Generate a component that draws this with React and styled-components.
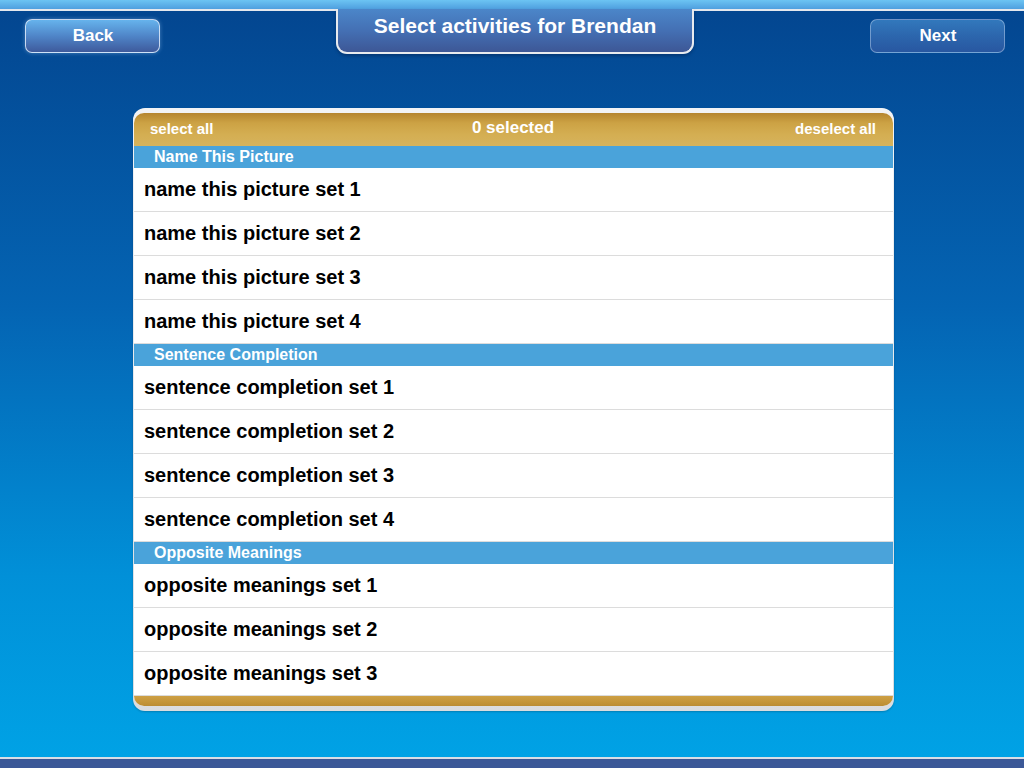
import React from "react";
import styled, { createGlobalStyle } from "styled-components";

const Global = createGlobalStyle`
  html, body { margin: 0; padding: 0; }
  body { font-family: "Liberation Sans", Arial, sans-serif; overflow: hidden; }
`;

const Page = styled.div`
  width: 1024px;
  height: 768px;
  display: flex;
  flex-direction: column;
  background: linear-gradient(180deg, #03458f 0%, #0464b3 40%, #0190d8 75%, #00a3e6 100%);
`;

const TopStrip = styled.div`
  height: 9px;
  flex: none;
  background: linear-gradient(180deg, #6cc4f3 0%, #4f9fdf 100%);
  border-bottom: 2px solid #e4e8ee;
`;

const HeaderRow = styled.div`
  height: 42px;
  flex: none;
  display: flex;
  justify-content: space-between;
  align-items: flex-start;
  padding: 0 19px 0 25px;
`;

const NavButton = styled.button`
  margin-top: 8px;
  width: 135px;
  height: 34px;
  border-radius: 7px;
  border: 1px solid ${(p) => (p.$bright ? "rgba(225,235,250,0.85)" : "rgba(200,220,245,0.45)")};
  background: ${(p) =>
    p.$bright
      ? "linear-gradient(180deg, #66b3ec 0%, #4f85c8 50%, #3e5a9c 100%)"
      : "linear-gradient(180deg, #3278bc 0%, #2c66ad 50%, #2857a1 100%)"};
  box-shadow: ${(p) => (p.$bright ? "0 0 4px rgba(160,200,240,0.45)" : "none")};
  color: #fff;
  font-family: "Liberation Sans", Arial, sans-serif;
  font-weight: bold;
  font-size: 17px;
  padding: 0 0 0 1px;
  display: flex;
  align-items: center;
  justify-content: center;
`;

const TitleTab = styled.div`
  margin-top: -2px;
  width: 354px;
  height: 41px;
  border: 2px solid #e8ebef;
  border-top: none;
  border-radius: 0 0 11px 11px;
  background: linear-gradient(180deg, #4b86c9 0%, #4470b4 50%, #3d5796 100%);
  box-shadow: 0 2px 3px rgba(0, 20, 60, 0.35);
  display: flex;
  align-items: center;
  justify-content: center;
  padding-bottom: 2px;
  box-sizing: content-box;
`;

const Title = styled.h1`
  margin: 0 0 8px 0;
  color: #fff;
  font-size: 21px;
  font-weight: bold;
  font-family: "Liberation Sans", Arial, sans-serif;
`;

const Main = styled.div`
  flex: 1;
  padding: 55px 0 0 133px;
`;

const Panel = styled.div`
  width: 759px;
  padding: 5px 1px 5px 1px;
  border-radius: 12px;
  background: linear-gradient(180deg, #f2f3f5 0%, #dadcdf 100%);
  box-shadow: 0 1px 2px rgba(0, 0, 0, 0.2);
`;

const Card = styled.div`
  border-radius: 10px;
  overflow: hidden;
  background: #fff;
`;

const GoldBar = styled.div`
  height: 33px;
  display: grid;
  grid-template-columns: 1fr auto 1fr;
  align-items: center;
  padding: 0 17px 3px 16px;
  box-sizing: border-box;
  background: linear-gradient(180deg, #b5852f 0%, #cca244 30%, #d4ae52 65%, #d6b35c 100%);
  color: #fff;
  font-weight: bold;
`;

const BarLink = styled.span`
  font-size: 15px;
  justify-self: ${(p) => (p.$right ? "end" : "start")};
`;

const Count = styled.span`
  font-size: 17px;
`;

const SectionHeader = styled.div`
  height: 22px;
  background: #4aa3da;
  color: #fff;
  font-weight: bold;
  font-size: 16px;
  padding-left: 20px;
  display: flex;
  align-items: center;
`;

const Row = styled.div`
  height: 43px;
  border-bottom: 1px solid #dcdcdc;
  display: flex;
  align-items: center;
  padding-left: 10px;
  font-size: 20px;
  font-weight: bold;
  color: #000;
`;

const GoldFoot = styled.div`
  height: 10px;
  background: linear-gradient(180deg, #cda045 0%, #c49538 60%, #bb8c32 100%);
`;

const BottomBar = styled.div`
  height: 9px;
  flex: none;
  border-top: 2px solid #d9dee6;
  background: #3b5897;
`;

const sections = [
  { title: "Name This Picture", items: [1, 2, 3, 4].map((n) => `name this picture set ${n}`) },
  { title: "Sentence Completion", items: [1, 2, 3, 4].map((n) => `sentence completion set ${n}`) },
  { title: "Opposite Meanings", items: [1, 2, 3].map((n) => `opposite meanings set ${n}`) },
];

export default function App() {
  return (
    <>
      <Global />
      <Page>
        <TopStrip />
        <HeaderRow>
          <NavButton $bright>Back</NavButton>
          <TitleTab>
            <Title>Select activities for Brendan</Title>
          </TitleTab>
          <NavButton>Next</NavButton>
        </HeaderRow>
        <Main>
          <Panel>
            <Card>
              <GoldBar>
                <BarLink>select all</BarLink>
                <Count>0 selected</Count>
                <BarLink $right>deselect all</BarLink>
              </GoldBar>
              {sections.map((s) => (
                <React.Fragment key={s.title}>
                  <SectionHeader>{s.title}</SectionHeader>
                  {s.items.map((it) => (
                    <Row key={it}>{it}</Row>
                  ))}
                </React.Fragment>
              ))}
              <GoldFoot />
            </Card>
          </Panel>
        </Main>
        <BottomBar />
      </Page>
    </>
  );
}
